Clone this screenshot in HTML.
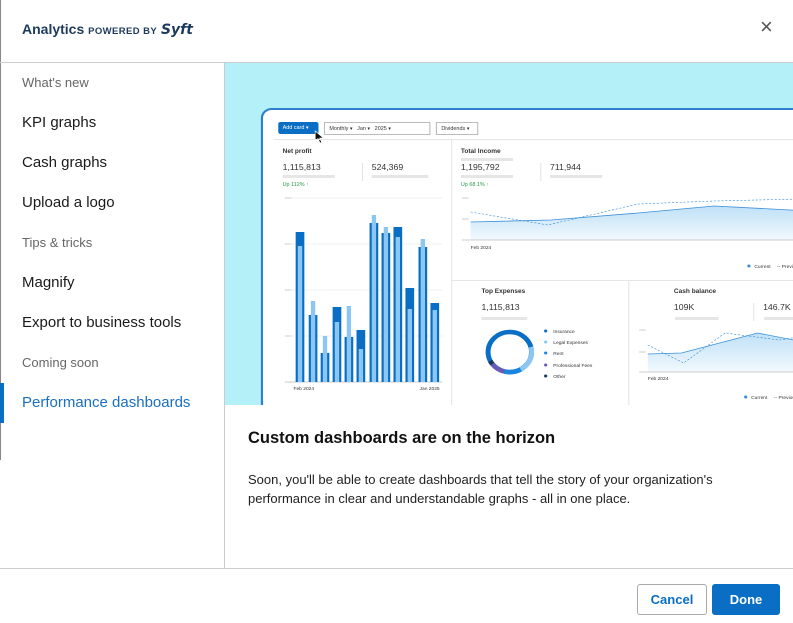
<!DOCTYPE html>
<html><head><style>
*{box-sizing:border-box;margin:0;padding:0}
body{width:793px;height:623px;overflow:hidden;background:#fff;font-family:"Liberation Sans",sans-serif;position:relative}
.abs{position:absolute}
.nav{position:absolute;left:22px;font-size:15px;color:#1a1a1a}
.nav.s{font-size:13px;color:#666}
.t{position:absolute;font-size:5px;color:#333;white-space:nowrap}
.g{position:absolute;height:3px;background:#e6e6e6}
.bar{position:absolute;background:#0a6fc4;width:8px}
.bar i{position:absolute;left:2px;width:4px;background:#8cc6f2;display:block}
</style></head><body>
<div class="abs" style="left:0;top:0;width:1px;height:460px;background:#888"></div>
<div class="abs" style="left:22px;top:21px;font-size:14px;font-weight:bold;color:#1d3a5c">Analytics <span style="font-size:9.5px;letter-spacing:.4px">POWERED BY</span> <span style="font-family:'DejaVu Sans';font-style:italic;font-size:14px">Syft</span></div>
<div class="abs" style="left:760px;top:14px;font-size:22px;color:#555">×</div>
<div class="abs" style="left:0;top:62px;width:793px;height:1px;background:#ccc"></div>
<div class="abs" style="left:224px;top:63px;width:1px;height:505px;background:#ccc"></div>
<div class="nav s" style="top:75px">What's new</div>
<div class="nav" style="top:114px">KPI graphs</div>
<div class="nav" style="top:154px">Cash graphs</div>
<div class="nav" style="top:194px">Upload a logo</div>
<div class="nav s" style="top:235px">Tips &amp; tricks</div>
<div class="nav" style="top:274px">Magnify</div>
<div class="nav" style="top:314px">Export to business tools</div>
<div class="nav s" style="top:355px">Coming soon</div>
<div class="abs" style="left:0;top:383px;width:4px;height:40px;background:#0a6fc4"></div>
<div class="nav" style="top:394px;color:#1a6fc0">Performance dashboards</div>

<div class="abs" style="left:225px;top:63px;width:568px;height:342px;background:#b3f0f8;overflow:hidden">
<div class="abs" style="left:0;top:0;width:568px;height:342px;transform:scaleX(1.087);transform-origin:0 0">
 <div class="abs" style="left:33px;top:45px;width:560px;height:320px;background:#fff;border:2px solid #2f7fd0;border-radius:10px"></div>
 <div class="abs" style="left:49px;top:59px;width:37px;height:12px;background:#0a6fc4;border-radius:2px;color:#fff;font-size:5px;padding:3px 4px;white-space:nowrap">Add card ▾</div>
 <div class="abs" style="left:91px;top:59px;width:98px;height:13px;border:1px solid #bbb;font-size:5px;padding:3px 4px;color:#333;white-space:nowrap">Monthly ▾ &nbsp; Jan ▾ &nbsp; 2025 ▾</div>
 <div class="abs" style="left:194px;top:59px;width:39px;height:13px;border:1px solid #bbb;font-size:5px;padding:3px 4px;color:#333;white-space:nowrap">Dividends ▾</div>
 <svg class="abs" style="left:82px;top:67px" width="10" height="14"><path d="M1 1 L1 11 L3.5 8.5 L5.5 13 L7 12.3 L5 8 L8.5 8 Z" fill="#111" stroke="#fff" stroke-width=".6"/></svg>
 <div class="abs" style="left:45px;top:76px;width:530px;height:1px;background:#e5e5e5"></div>
 <div class="abs" style="left:208px;top:77px;width:1px;height:270px;background:#e5e5e5"></div>
 <div class="abs" style="left:209px;top:217px;width:360px;height:1px;background:#e5e5e5"></div>
 <div class="abs" style="left:371px;top:218px;width:1px;height:130px;background:#e5e5e5"></div>
 <div class="t" style="left:53px;top:86px;font-weight:bold;font-size:6px">Net profit</div>
 <div class="t" style="left:53px;top:100px;font-size:8px">1,115,813</div>
 <div class="t" style="left:135px;top:100px;font-size:8px">524,369</div>
 <div class="abs" style="left:126px;top:100px;width:1px;height:18px;background:#e5e5e5"></div>
 <div class="g" style="left:53px;top:112px;width:48px"></div><div class="g" style="left:135px;top:112px;width:52px"></div>
 <div class="t" style="left:53px;top:119px;color:#2a9a4a">Up 112% ↑</div>
 <div class="t" style="left:217px;top:86px;font-weight:bold;font-size:6px">Total Income</div>
 <div class="g" style="left:217px;top:95px;width:48px"></div>
 <div class="t" style="left:217px;top:100px;font-size:8px">1,195,792</div>
 <div class="t" style="left:299px;top:100px;font-size:8px">711,944</div>
 <div class="abs" style="left:290px;top:100px;width:1px;height:18px;background:#e5e5e5"></div>
 <div class="g" style="left:217px;top:112px;width:48px"></div><div class="g" style="left:299px;top:112px;width:48px"></div>
 <div class="t" style="left:217px;top:119px;color:#2a9a4a">Up 68.1% ↑</div>
 <svg class="abs" style="left:0;top:0" width="568" height="342">
  <g stroke="#eee" stroke-width=".7"><line x1="60" y1="135" x2="200" y2="135"/><line x1="60" y1="181" x2="200" y2="181"/><line x1="60" y1="227" x2="200" y2="227"/><line x1="60" y1="273" x2="200" y2="273"/></g>
  <g fill="#e6e6e6"><rect x="55" y="134" width="6" height="2"/><rect x="55" y="180" width="6" height="2"/><rect x="55" y="226" width="6" height="2"/><rect x="55" y="272" width="6" height="2"/><rect x="55" y="318" width="6" height="2"/>
  <rect x="218" y="134" width="6" height="2"/><rect x="218" y="155" width="6" height="2"/><rect x="218" y="176" width="6" height="2"/>
  <rect x="381" y="266" width="6" height="2"/><rect x="381" y="288" width="6" height="2"/><rect x="381" y="308" width="6" height="2"/></g>
  <line x1="60" y1="319" x2="200" y2="319" stroke="#ccc"/>
  <defs><linearGradient id="gr" x1="0" y1="0" x2="0" y2="1"><stop offset="0" stop-color="#bfe0f7"/><stop offset="1" stop-color="#f2f9fe"/></linearGradient></defs>
  <path d="M226 159 L300 157 L380 150 L450 143 L520 147 L568 150 L568 177 L226 177Z" fill="url(#gr)"/>
  <path d="M226 159 L300 157 L380 150 L450 143 L520 147 L568 150" fill="none" stroke="#3a8fd8" stroke-width=".8"/>
  <path d="M226 149 L297 162 L380 141 L450 138 L568 135" fill="none" stroke="#3a8fd8" stroke-width=".6" stroke-dasharray="2 1.5"/>
  <line x1="224" y1="177" x2="568" y2="177" stroke="#ccc"/>
  <path d="M389 291 L420 290 L490 270 L523 277 L568 270 L568 309 L389 309Z" fill="url(#gr)"/>
  <path d="M389 291 L420 290 L490 270 L523 277 L568 270" fill="none" stroke="#3a8fd8" stroke-width=".8"/>
  <path d="M389 282 L422 300 L460 270 L510 277 L568 267" fill="none" stroke="#3a8fd8" stroke-width=".6" stroke-dasharray="2 1.5"/>
  <line x1="387" y1="309" x2="568" y2="309" stroke="#ccc"/>
  <circle cx="262" cy="289" r="20" fill="none" stroke="#0a6fc4" stroke-width="4.5"/>
  <path d="M281.5 284 A20 20 0 0 1 272 306.5" fill="none" stroke="#8cc6f2" stroke-width="4.5"/>
  <path d="M272 306.5 A20 20 0 0 1 257 308.5" fill="none" stroke="#1a86e0" stroke-width="4.5"/>
  <path d="M257 308.5 A20 20 0 0 1 246 301" fill="none" stroke="#6a5ab8" stroke-width="4.5"/>
  <path d="M246 301 A20 20 0 0 1 244 298" fill="none" stroke="#1d3a5c" stroke-width="4.5"/>
  <g font-size="4.5" fill="#333" font-family="Liberation Sans">
   <circle cx="295" cy="268" r="1.5" fill="#0a6fc4"/><text x="302" y="270">Insurance</text>
   <circle cx="295" cy="279" r="1.5" fill="#8cc6f2"/><text x="302" y="281">Legal Expenses</text>
   <circle cx="295" cy="290" r="1.5" fill="#1a86e0"/><text x="302" y="292">Rent</text>
   <circle cx="295" cy="302" r="1.5" fill="#6a5ab8"/><text x="302" y="304">Professional Fees</text>
   <circle cx="295" cy="313" r="1.5" fill="#1d3a5c"/><text x="302" y="315">Other</text>
   <text x="63" y="327">Feb 2024</text><text x="179" y="327">Jan 2025</text>
   <text x="226" y="186">Feb 2024</text><text x="555" y="186">Jan 2025</text>
   <circle cx="482" cy="203" r="1.5" fill="#3a8fd8"/><text x="487" y="205">Current</text><text x="508" y="205">-- Previous</text>
   <text x="389" y="317">Feb 2024</text><text x="548" y="317">Jan 2025</text>
   <circle cx="479" cy="334" r="1.5" fill="#3a8fd8"/><text x="484" y="336">Current</text><text x="505" y="336">-- Previous</text>
  </g>
 </svg>
 <div class="t" style="left:236px;top:226px;font-weight:bold;font-size:6px">Top Expenses</div>
 <div class="t" style="left:236px;top:240px;font-size:8px">1,115,813</div>
 <div class="g" style="left:236px;top:254px;width:42px"></div>
 <div class="t" style="left:413px;top:226px;font-weight:bold;font-size:6px">Cash balance</div>
 <div class="t" style="left:413px;top:240px;font-size:8px">109K</div>
 <div class="t" style="left:495px;top:240px;font-size:8px">146.7K</div>
 <div class="abs" style="left:486px;top:240px;width:1px;height:18px;background:#e5e5e5"></div>
 <div class="g" style="left:414px;top:254px;width:40px"></div><div class="g" style="left:496px;top:254px;width:40px"></div>
 <div class="bar" style="left:65px;top:169px;height:150px"><i style="top:14px;height:136px"></i></div>
 <div class="bar" style="left:77px;top:252px;height:67px"><i style="top:-14px;height:81px"></i></div>
 <div class="bar" style="left:88px;top:290px;height:29px"><i style="top:-17px;height:46px"></i></div>
 <div class="bar" style="left:99px;top:244px;height:75px"><i style="top:15px;height:60px"></i></div>
 <div class="bar" style="left:110px;top:274px;height:45px"><i style="top:-31px;height:76px"></i></div>
 <div class="bar" style="left:121px;top:267px;height:52px"><i style="top:19px;height:33px"></i></div>
 <div class="bar" style="left:133px;top:160px;height:159px"><i style="top:-8px;height:167px"></i></div>
 <div class="bar" style="left:144px;top:170px;height:149px"><i style="top:-6px;height:155px"></i></div>
 <div class="bar" style="left:155px;top:164px;height:155px"><i style="top:10px;height:145px"></i></div>
 <div class="bar" style="left:166px;top:225px;height:94px"><i style="top:21px;height:73px"></i></div>
 <div class="bar" style="left:178px;top:184px;height:135px"><i style="top:-8px;height:143px"></i></div>
 <div class="bar" style="left:189px;top:240px;height:79px"><i style="top:7px;height:72px"></i></div>
</div>
</div>

<div class="abs" style="left:248px;top:429px;font-size:16.5px;font-weight:bold;color:#111">Custom dashboards are on the horizon</div>
<div class="abs" style="left:248px;top:470px;width:520px;font-size:13px;line-height:19px;color:#222">Soon, you'll be able to create dashboards that tell the story of your organization's performance in clear and understandable graphs - all in one place.</div>
<div class="abs" style="left:0;top:568px;width:793px;height:1px;background:#ccc"></div>
<div class="abs" style="left:637px;top:584px;width:70px;height:31px;border:1px solid #aaa;border-radius:3px;font-size:13px;font-weight:bold;color:#0a6fc4;text-align:center;line-height:29px">Cancel</div>
<div class="abs" style="left:712px;top:584px;width:68px;height:31px;background:#0a6fc4;border-radius:3px;font-size:13px;font-weight:bold;color:#fff;text-align:center;line-height:31px">Done</div>
</body></html>
